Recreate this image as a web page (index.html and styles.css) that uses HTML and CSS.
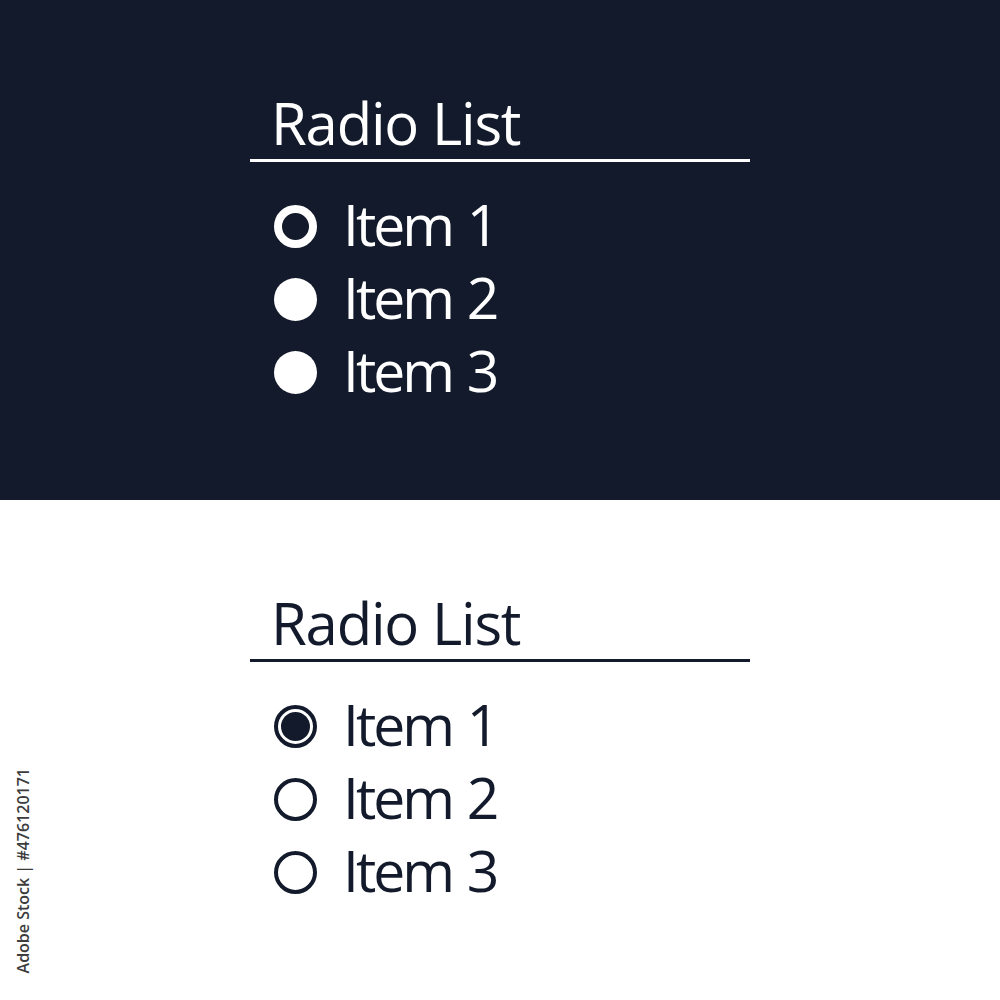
FILE: index.html
```html
<!DOCTYPE html>
<html lang="en">
<head>
    <meta charset="UTF-8">
    <meta name="viewport" content="width=device-width, initial-scale=1.0">
    <title>Radio List</title>
    <link rel="stylesheet" href="styles.css">
</head>
<body>
    <div class="panel panel-dark">
        <div class="radio-list">
            <h2 class="list-title">Radio List</h2>
            <ul class="items">
                <li class="item"><span class="radio ring"></span>Item 1</li>
                <li class="item"><span class="radio filled"></span>Item 2</li>
                <li class="item"><span class="radio filled"></span>Item 3</li>
            </ul>
        </div>
    </div>

    <div class="panel panel-light">
        <div class="radio-list">
            <h2 class="list-title">Radio List</h2>
            <ul class="items">
                <li class="item"><span class="radio checked"></span>Item 1</li>
                <li class="item"><span class="radio outline"></span>Item 2</li>
                <li class="item"><span class="radio outline"></span>Item 3</li>
            </ul>
        </div>
        <div class="stock-id">Adobe Stock | #476120171</div>
    </div>
</body>
</html>
```

FILE: styles.css
```css
body {
    margin: 0;
    font-family: "Open Sans", "Noto Sans", sans-serif;
}

.panel {
    position: relative;
    height: 500px;
    box-sizing: border-box;
    padding-top: 94px;
}

.panel-dark {
    background: #121a2b;
    color: #fff;
}

.panel-light {
    background: #fff;
    color: #121a2b;
}

.radio-list {
    width: 500px;
    margin-left: 250px;
}

.list-title {
    margin: 0;
    padding: 0 0 7px 21px;
    font-size: 58px;
    font-weight: 400;
    line-height: 1;
    letter-spacing: -1.2px;
    border-bottom: 3px solid currentColor;
}

.items {
    list-style: none;
    margin: 26px 0 0;
    padding: 0 0 0 24px;
}

.item {
    display: flex;
    align-items: center;
    gap: 26px;
    height: 73px;
    font-size: 57px;
    line-height: 73px;
    letter-spacing: -3px;
    word-spacing: 3px;
}

.radio {
    width: 43px;
    height: 43px;
    box-sizing: border-box;
    border-radius: 50%;
    margin-top: 4px;
    flex-shrink: 0;
}

.ring {
    border: 8px solid #fff;
}

.filled {
    background: #fff;
}

.outline {
    border: 4px solid #121a2b;
}

.checked {
    border: 4px solid #121a2b;
    padding: 3px;
    background: #121a2b content-box;
    background-clip: content-box;
}

.stock-id {
    position: absolute;
    left: 12px;
    bottom: 27px;
    writing-mode: vertical-rl;
    transform: rotate(180deg);
    font-size: 16px;
    font-weight: 600;
    color: #3c3c3c;
}
```
